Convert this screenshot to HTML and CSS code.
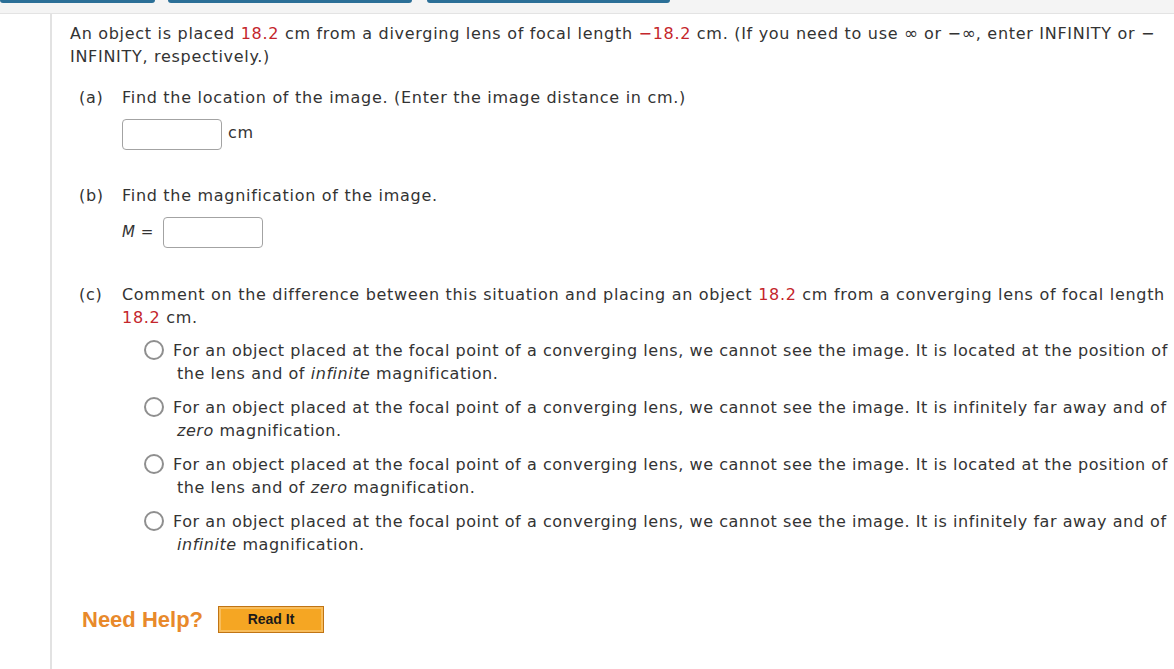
FILE: index.html
```html
<!DOCTYPE html>
<html>
<head>
<meta charset="utf-8">
<link rel="stylesheet" href="styles.css">
</head>
<body>
<div class="topbar">
  <span class="tab tab1"></span>
  <span class="tab tab2"></span>
  <span class="tab tab3"></span>
</div>
<div class="page">
  <div class="gutter"></div>
  <div class="content">
    <p class="intro">An object is placed <span class="red">18.2</span> cm from a diverging lens of focal length <span class="red">&minus;18.2</span> cm. (If you need to use <span class="inf">&infin;</span> or &minus;<span class="inf">&infin;</span>, enter INFINITY or &minus;<wbr>INFINITY, respectively.)</p>

    <div class="part part-a">
      <div class="q"><span class="lbl">(a)</span><span class="qt">Find the location of the image. (Enter the image distance in cm.)</span></div>
      <div class="ans-row"><input type="text" class="ans"><span class="unit">cm</span></div>
    </div>

    <div class="part part-b">
      <div class="q"><span class="lbl">(b)</span><span class="qt">Find the magnification of the image.</span></div>
      <div class="ans-row"><span class="var"><i>M</i> =</span><input type="text" class="ans"></div>
    </div>

    <div class="part part-c">
      <div class="q"><span class="lbl">(c)</span><span class="qt">Comment on the difference between this situation and placing an object <span class="red">18.2</span> cm from a converging lens of focal length <span class="red">18.2</span> cm.</span></div>
      <ul class="options">
        <li class="opt"><span class="radio"></span><span class="ot">For an object placed at the focal point of a converging lens, we cannot see the image. It is located at the position of the lens and of <i>infinite</i> magnification.</span></li>
        <li class="opt"><span class="radio"></span><span class="ot">For an object placed at the focal point of a converging lens, we cannot see the image. It is infinitely far away and of <i>zero</i> magnification.</span></li>
        <li class="opt"><span class="radio"></span><span class="ot">For an object placed at the focal point of a converging lens, we cannot see the image. It is located at the position of the lens and of <i>zero</i> magnification.</span></li>
        <li class="opt"><span class="radio"></span><span class="ot">For an object placed at the focal point of a converging lens, we cannot see the image. It is infinitely far away and of <i>infinite</i> magnification.</span></li>
      </ul>
    </div>

    <div class="help">
      <span class="need">Need Help?</span>
      <span class="readit">Read It</span>
    </div>
  </div>
</div>
</body>
</html>
```
FILE: styles.css
```css
html, body {
  margin: 0;
  padding: 0;
  background: #ffffff;
}
body {
  font-family: "DejaVu Sans", Verdana, sans-serif;
  font-size: 16px;
  line-height: 23px;
  letter-spacing: 0.7px;
  color: #333333;
  overflow: hidden;
}
.topbar {
  height: 13px;
  background: #f4f4f4;
  border-bottom: 1px solid #e3e3e3;
  display: flex;
  align-items: flex-start;
}
.tab {
  display: block;
  height: 3px;
  background: #2b6f97;
  border-radius: 0 0 4px 4px;
}
.tab1 { width: 155px; }
.tab2 { width: 244px; margin-left: 13px; }
.tab3 { width: 243px; margin-left: 15px; }

.page {
  display: flex;
  min-height: 660px;
}
.gutter {
  width: 50px;
  border-right: 2px solid #e2e2e2;
  flex: none;
}
.content {
  padding: 8px 0 0 18px;
  flex: 1;
  min-width: 0;
}
.intro {
  margin: 0;
}
.inf {
  font-size: 17px;
  letter-spacing: 0;
}
.red { color: #c4262c; }

.part { padding-left: 9px; }
.part-a { margin-top: 18px; }
.part-b { margin-top: 34px; }
.part-c { margin-top: 35px; }

.q { display: flex; }
.lbl { width: 43px; flex: none; }
.qt { flex: 1; }

.ans-row {
  display: flex;
  align-items: center;
  margin-left: 43px;
  margin-top: 10px;
  height: 31px;
}
.ans {
  width: 100px;
  height: 31px;
  box-sizing: border-box;
  border: 1px solid #a3a3a3;
  border-radius: 4px;
  background: #fff;
  margin: 0;
  padding: 0 4px;
  font: inherit;
}
.unit { margin-left: 6px; margin-top: -5px; }
.var { margin-right: 9px; font-size: 15px; letter-spacing: 0.5px; }
.var i { font-style: italic; }

.options {
  list-style: none;
  margin: 10px 0 0 0;
  padding: 0 0 0 65px;
}
.opt {
  display: flex;
  align-items: flex-start;
  margin-bottom: 11px;
}
.radio {
  flex: none;
  width: 20px;
  height: 20px;
  box-sizing: border-box;
  border: 2px solid #8f8f8f;
  border-radius: 50%;
  background: #fff;
  margin-top: 1px;
}
.ot {
  flex: 1;
  margin-left: 9px;
  margin-right: -12px;
  padding-left: 4px;
  text-indent: -4px;
  letter-spacing: 0.55px;
}

.help {
  display: flex;
  align-items: center;
  margin-top: 50px;
  margin-left: 12px;
}
.need {
  font-family: "Liberation Sans", Arial, sans-serif;
  font-weight: bold;
  font-size: 22px;
  letter-spacing: 0;
  color: #e8892b;
}
.readit {
  margin-left: 15px;
  width: 106px;
  height: 27px;
  box-sizing: border-box;
  border: 1px solid #c07414;
  background: #f5a623;
  box-shadow: inset 0 0 0 2px #f8bd5c;
  display: flex;
  align-items: center;
  justify-content: center;
  font-family: "Liberation Sans", Arial, sans-serif;
  font-weight: bold;
  font-size: 14px;
  letter-spacing: 0;
  color: #1a1a1a;
}
```
